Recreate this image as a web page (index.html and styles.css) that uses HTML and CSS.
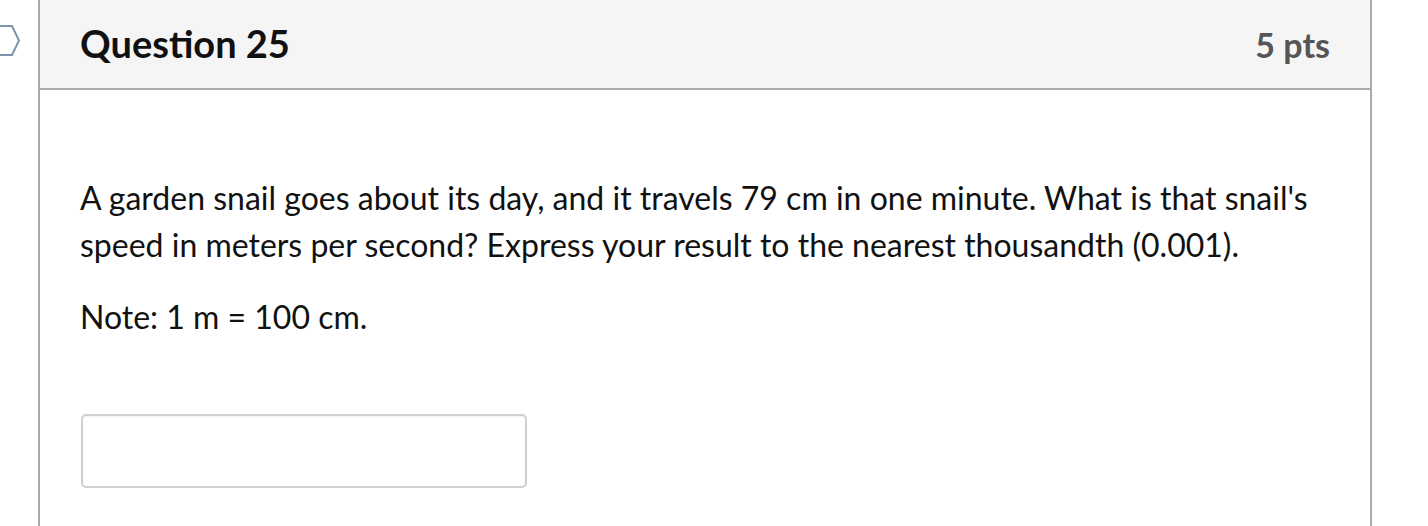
FILE: index.html
```html
<!DOCTYPE html>
<html lang="en">
<head>
<meta charset="utf-8">
<title>Question 25</title>
<link rel="stylesheet" href="styles.css">
</head>
<body>
<div class="page">
  <div class="gutter">
    <svg class="flag" width="38" height="80" viewBox="0 0 38 80" aria-hidden="true">
      <path d="M-10 26 H12 L19 40.5 L12 55 H-10" fill="none" stroke="#7d94aa" stroke-width="2" stroke-linejoin="miter"/>
    </svg>
  </div>
  <div class="card">
    <div class="card-header">
      <span class="q-title">Question 25</span>
      <span class="q-points">5 pts</span>
    </div>
    <div class="card-body">
      <p class="q-text">A garden snail goes about its day, and it travels 79 cm in one minute. What is that snail's speed in meters per second? Express your result to the nearest thousandth (0.001).</p>
      <p class="q-text">Note: 1 m = 100 cm.</p>
      <input class="answer" type="text" aria-label="Answer">
    </div>
  </div>
</div>
</body>
</html>
```

FILE: styles.css
```css
html, body {
  margin: 0;
  padding: 0;
  background: #ffffff;
}

body {
  font-family: Lato, "Open Sans", "Liberation Sans", sans-serif;
  color: #111111;
  overflow: hidden;
}

.page {
  display: flex;
  align-items: flex-start;
  width: 1428px;
}

.gutter {
  width: 38px;
  flex: none;
}

.flag {
  display: block;
}

.card {
  width: 1330px;
  flex: none;
  border-left: 2px solid #ababab;
  border-right: 2px solid #ababab;
  min-height: 600px;
}

.card-header {
  display: flex;
  align-items: center;
  justify-content: space-between;
  height: 88px;
  padding: 0 40px;
  background: #f5f5f5;
  border-bottom: 2px solid #ababab;
}

.q-title {
  font-size: 38px;
  font-weight: 700;
  color: #111111;
  margin-top: -2px;
}

.q-points {
  font-size: 34px;
  font-weight: 700;
  color: #555555;
  margin-top: 0;
}

.card-body {
  padding: 84px 40px 0 40px;
}

.q-text {
  margin: 0 0 25px 0;
  font-size: 32px;
  line-height: 47px;
}

.answer {
  display: block;
  margin-top: 74px;
  margin-left: 1px;
  width: 446px;
  height: 74px;
  box-sizing: border-box;
  border: 2px solid #cfcfcf;
  border-radius: 5px;
  background: #ffffff;
  box-shadow: inset 0 1px 2px rgba(0, 0, 0, 0.06);
  font-family: inherit;
  font-size: 28px;
  padding: 0 12px;
  outline: none;
}
```
